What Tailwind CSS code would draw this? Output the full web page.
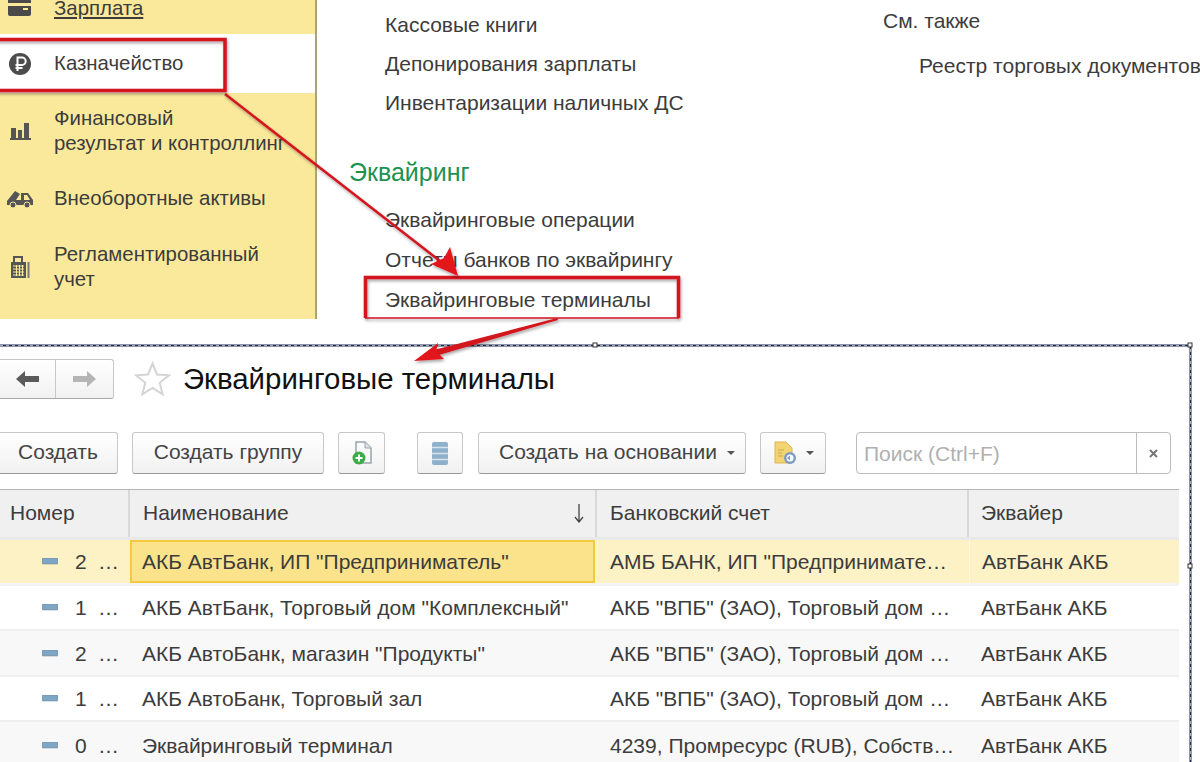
<!DOCTYPE html>
<html lang="ru">
<head>
<meta charset="utf-8">
<script src="https://cdn.jsdelivr.net/npm/@tailwindcss/browser@4"></script>
<title>Эквайринговые терминалы</title>
</head>
<body class="bg-white">
<div class="relative w-[1200px] h-[762px] overflow-hidden bg-white font-['Liberation_Sans',Arial,sans-serif] text-[21px] leading-[25px] text-[#3c3c3c]">

  <!-- Upper screenshot -->
  <div class="flex h-[319px]">
    <aside class="w-[317px] h-[319px] shrink-0 overflow-hidden bg-[#fbe99b] border-r-2 border-[#a9a27a] text-[20.400px]">
      <div class="flex flex-col -mt-[25px]">
        <div class="h-[59px] pt-[7px] flex items-center">
          <div class="w-[54px] pl-[8px] shrink-0"><svg width="24" height="22" viewBox="0 0 24 22"><rect width="23" height="17" y="2" rx="2" fill="#4a4a4a"/><rect y="6" width="23" height="3" fill="#fbe99b"/><rect x="15" y="11" width="5" height="2" fill="#fbe99b"/></svg></div>
          <span class="underline underline-offset-2">Зарплата</span>
        </div>
        <div class="h-[59px] flex items-center bg-white">
          <div class="w-[54px] pl-[8px] shrink-0"><svg width="24" height="24" viewBox="0 0 24 24"><circle cx="12" cy="12" r="11" fill="#4c4c4c"/><path d="M9.500 19V5.500h4.500a3.700 3.700 0 0 1 0 7.400H7.500M7.500 16h7" fill="none" stroke="#fff" stroke-width="2"/></svg></div>
          <span>Казначейство</span>
        </div>
        <div class="h-[75px] flex items-center">
          <div class="w-[54px] pl-[9px] shrink-0"><svg width="23" height="18" viewBox="0 0 23 18"><path d="M2 6h5v10H2zM9 8h4v8H9zM15 1h5v15h-5z" fill="#555"/><rect x="1" y="16" width="21" height="2" fill="#555"/></svg></div>
          <span>Финансовый<br>результат и контроллинг</span>
        </div>
        <div class="h-[60px] flex items-center">
          <div class="w-[54px] pl-[6px] shrink-0"><svg width="28" height="22" viewBox="0 0 28 22"><path d="M1 14 9 4l5 3-4 6h5V6h7l5 7v5H1z" fill="#555"/><path d="M18 8h3l3 5h-6z" fill="#fbe99b"/><circle cx="7" cy="18" r="3" fill="#555" stroke="#fbe99b"/><circle cx="21" cy="18" r="3" fill="#555" stroke="#fbe99b"/></svg></div>
          <span>Внеоборотные активы</span>
        </div>
        <div class="h-[77px] flex items-center">
          <div class="w-[54px] pl-[10px] shrink-0"><svg width="20" height="24" viewBox="0 0 20 24"><path d="M3 1h10v6h3v16H1V7h2z" fill="#555"/><rect x="5" y="3" width="6" height="4" fill="#fbe99b"/><path d="M3 11h11M3 14h11M3 17h11M3 20h11M6.500 10v11M9.500 10v11M12.500 10v11" stroke="#fbe99b" stroke-width="1"/><rect x="17.500" y="7" width="2" height="16" fill="#777"/></svg></div>
          <span>Регламентированный<br>учет</span>
        </div>
      </div>
    </aside>

    <section class="w-[566px] shrink-0 pl-[32px] flex flex-col">
      <ul class="pl-[36px] flex flex-col gap-[14px] pt-[12px]">
        <li>Кассовые книги</li>
        <li>Депонирования зарплаты</li>
        <li>Инвентаризации наличных ДС</li>
      </ul>
      <h2 class="mt-[42px] text-[25px] leading-[30px] text-[#1d9150] font-normal">Эквайринг</h2>
      <ul class="pl-[36px] flex flex-col gap-[15px] mt-[20px]">
        <li>Эквайринговые операции</li>
        <li>Отчеты банков по эквайрингу</li>
        <li>Эквайринговые терминалы</li>
      </ul>
    </section>

    <section class="flex-1 min-w-0 whitespace-nowrap pt-[8px]">
      <div>См. также</div>
      <div class="pl-[36px] mt-[20px]">Реестр торговых документов</div>
    </section>
  </div>

  <!-- Lower screenshot -->
  <div class="mt-[26px] w-[1179px]">
    <div class="flex items-center pt-[13px] h-[54px]">
      <div class="flex w-[116px] h-[40px] -ml-[2px] shrink-0 rounded-r-[3px] border border-[#c8c8c8] border-b-[#aaa] bg-gradient-to-b from-white to-[#f1f1f1]">
        <div class="w-[57px] flex items-center justify-end pr-[16px] border-r border-[#c8c8c8]">
          <svg width="23" height="16" viewBox="0 0 23 16"><path d="M0 8 9 0v5h14v6H9v5z" fill="#5b5b5b"/></svg>
        </div>
        <div class="flex-1 flex items-center justify-center">
          <svg width="23" height="16" viewBox="0 0 23 16"><path d="M23 8 14 0v5H0v6h14v5z" fill="#b5b5b5"/></svg>
        </div>
      </div>
      <svg class="ml-[20px]" width="37" height="36" viewBox="0 0 37 36"><path d="M18.500 2.500 23 13.500l12 .8-9.300 7.500 3 11.500-10.200-6.300-10.200 6.300 3-11.500L2 14.300l12-.8z" fill="#fff" stroke="#d4d4d4" stroke-width="2"/></svg>
      <h1 class="ml-[12px] text-[29.400px] leading-[34px] font-normal text-[#111]">Эквайринговые терминалы</h1>
    </div>

    <div class="flex items-stretch h-[42px] mt-[33px] text-[#444]">
      <button class="w-[120px] -ml-[2px] flex items-center justify-center rounded-[3px] border border-[#c8c8c8] border-b-[#999] bg-gradient-to-b from-white to-[#f1f1f1]"><span class="-mt-[4px]">Создать</span></button>
      <button class="w-[192px] ml-[14px] flex items-center justify-center rounded-[3px] border border-[#c8c8c8] border-b-[#999] bg-gradient-to-b from-white to-[#f1f1f1]"><span class="-mt-[4px]">Создать группу</span></button>
      <button class="w-[47px] ml-[14px] flex items-center justify-center rounded-[3px] border border-[#c8c8c8] border-b-[#999] bg-gradient-to-b from-white to-[#f1f1f1]">
        <svg width="22" height="24" viewBox="0 0 22 24"><path d="M5 1h9l6 6v15H5z" fill="#fafafa" stroke="#9aa5ad" stroke-width="1.500"/><path d="M14 1v6h6" fill="#dfe3e6" stroke="#9aa5ad"/><circle cx="8" cy="17" r="6.500" fill="#3cab48"/><path d="M8 13.500v7M4.500 17h7" stroke="#fff" stroke-width="2"/></svg>
      </button>
      <button class="w-[46px] ml-[32px] flex items-center justify-center rounded-[3px] border border-[#c8c8c8] border-b-[#999] bg-gradient-to-b from-white to-[#f1f1f1]">
        <svg width="16" height="23" viewBox="0 0 16 23"><rect width="16" height="23" rx="2" fill="#8fb0cb"/><path d="M0 5.500h16M0 11.500h16M0 17.500h16" stroke="#d7e3ec" stroke-width="1.500"/></svg>
      </button>
      <button class="w-[268px] ml-[15px] flex items-center gap-[10px] pl-[20px] rounded-[3px] border border-[#c8c8c8] border-b-[#999] bg-gradient-to-b from-white to-[#f1f1f1]">
        <span class="-mt-[4px]">Создать на основании</span>
        <svg width="8" height="4" viewBox="0 0 8 4"><path d="M0 0h8L4 4z" fill="#555"/></svg>
      </button>
      <button class="w-[66px] ml-[14px] flex items-center justify-center gap-[9px] rounded-[3px] border border-[#c8c8c8] border-b-[#999] bg-gradient-to-b from-white to-[#f1f1f1]">
        <svg width="24" height="24" viewBox="0 0 24 24"><path d="M2 1h11l6 6v15H2z" fill="#f3d472" stroke="#dcb64c"/><path d="M5 9h6M5 12h4M5 15h5" stroke="#c9a94d"/><circle cx="17" cy="17" r="6" fill="#7f9cc4"/><circle cx="17" cy="17" r="3.500" fill="#fff"/><path d="M14 17l3-2.500v5z" fill="#7f9cc4"/></svg>
        <svg width="8" height="4" viewBox="0 0 8 4"><path d="M0 0h8L4 4z" fill="#555"/></svg>
      </button>
      <div class="w-[315px] ml-[30px] flex rounded-[4px] border border-[#bdbdbd] bg-white">
        <span class="flex-1 pl-[7px] self-center text-[#b0b0b0]">Поиск (Ctrl+F)</span>
        <span class="w-[34px] flex items-center justify-center border-l border-[#bdbdbd]">
          <svg width="9" height="9" viewBox="0 0 9 9"><path d="M1 1l7 7M8 1 1 8" stroke="#777" stroke-width="2"/></svg>
        </span>
      </div>
    </div>

    <div class="mt-[15px] border-t border-[#b5b5b5]">
      <div class="grid grid-cols-[130px_467px_372px_210px] h-[50px] pb-0 bg-[#f0f0f0] border-b-[3px] border-[#e9e9e9]">
        <div class="flex items-center pl-[10px] pb-[2px] border-r-2 border-[#d9d9d9]">Номер</div>
        <div class="flex items-center justify-between pl-[13px] pr-[11px] pb-[2px] border-r-2 border-[#d9d9d9]">
          <span>Наименование</span>
          <svg width="10" height="20" viewBox="0 0 10 20"><path d="M5 1v17M1 14l4 5 4-5" fill="none" stroke="#444" stroke-width="1.300"/></svg>
        </div>
        <div class="flex items-center pl-[13px] pb-[2px] border-r-2 border-[#d9d9d9]">Банковский счет</div>
        <div class="flex items-center pl-[12px] pb-[2px]">Эквайер</div>
      </div>

      <div class="grid grid-cols-[130px_467px_372px_210px] h-[45.750px] bg-[#fdf2c6] border-b-[3px] border-[#f3f3f3]">
        <div class="flex items-center pl-[42px]"><svg width="16" height="7" viewBox="0 0 16 7"><rect width="16" height="6" rx="1" fill="#7fa6c4" stroke="#68808f" stroke-width=".5"/></svg><span class="ml-[17px] w-[23px]">2</span><span>…</span></div>
        <div class="flex items-center pl-[10px] bg-[#fbe38c] border-2 border-[#f5c93c] mr-[2px]">АКБ АвтБанк, ИП "Предприниматель"</div>
        <div class="pl-[13px] flex items-center whitespace-nowrap overflow-hidden">АМБ БАНК, ИП "Предпринимате…</div>
        <div class="pl-[12px] flex items-center border-l border-[#fbf8ea]">АвтБанк АКБ</div>
      </div>
      <div class="grid grid-cols-[130px_467px_372px_210px] h-[45.500px] bg-white border-b-[2px] border-[#efefef]">
        <div class="flex items-center pl-[42px]"><svg width="16" height="7" viewBox="0 0 16 7"><rect width="16" height="6" rx="1" fill="#7fa6c4" stroke="#68808f" stroke-width=".5"/></svg><span class="ml-[17px] w-[23px]">1</span><span>…</span></div>
        <div class="pl-[12px] flex items-center">АКБ АвтБанк, Торговый дом "Комплексный"</div>
        <div class="pl-[13px] flex items-center whitespace-nowrap overflow-hidden">АКБ "ВПБ" (ЗАО), Торговый дом …</div>
        <div class="pl-[12px] flex items-center">АвтБанк АКБ</div>
      </div>
      <div class="grid grid-cols-[130px_467px_372px_210px] h-[45.500px] bg-[#f8f8f8] border-b-[2px] border-[#efefef]">
        <div class="flex items-center pl-[42px]"><svg width="16" height="7" viewBox="0 0 16 7"><rect width="16" height="6" rx="1" fill="#7fa6c4" stroke="#68808f" stroke-width=".5"/></svg><span class="ml-[17px] w-[23px]">2</span><span>…</span></div>
        <div class="pl-[12px] flex items-center">АКБ АвтоБанк, магазин "Продукты"</div>
        <div class="pl-[13px] flex items-center whitespace-nowrap overflow-hidden">АКБ "ВПБ" (ЗАО), Торговый дом …</div>
        <div class="pl-[12px] flex items-center">АвтБанк АКБ</div>
      </div>
      <div class="grid grid-cols-[130px_467px_372px_210px] h-[45.500px] bg-white border-b-[2px] border-[#efefef]">
        <div class="flex items-center pl-[42px]"><svg width="16" height="7" viewBox="0 0 16 7"><rect width="16" height="6" rx="1" fill="#7fa6c4" stroke="#68808f" stroke-width=".5"/></svg><span class="ml-[17px] w-[23px]">1</span><span>…</span></div>
        <div class="pl-[12px] flex items-center">АКБ АвтоБанк, Торговый зал</div>
        <div class="pl-[13px] flex items-center whitespace-nowrap overflow-hidden">АКБ "ВПБ" (ЗАО), Торговый дом …</div>
        <div class="pl-[12px] flex items-center">АвтБанк АКБ</div>
      </div>
      <div class="grid grid-cols-[130px_467px_372px_210px] h-[45.500px] bg-[#f8f8f8]">
        <div class="flex items-center pl-[42px]"><svg width="16" height="7" viewBox="0 0 16 7"><rect width="16" height="6" rx="1" fill="#7fa6c4" stroke="#68808f" stroke-width=".5"/></svg><span class="ml-[17px] w-[23px]">0</span><span>…</span></div>
        <div class="pl-[12px] flex items-center">Эквайринговый терминал</div>
        <div class="pl-[13px] flex items-center whitespace-nowrap overflow-hidden">4239, Промресурс (RUB), Собств…</div>
        <div class="pl-[12px] flex items-center">АвтБанк АКБ</div>
      </div>
    </div>
  </div>

  <!-- Annotation overlay: red frames, arrows and selection handles -->
  <svg class="absolute inset-0 pointer-events-none" width="1200" height="762" viewBox="0 0 1200 762">
    <defs>
      <filter id="s" x="-10%" y="-10%" width="120%" height="130%"><feDropShadow dx="1" dy="2" stdDeviation="1.500" flood-color="#000" flood-opacity=".35"/></filter>
    </defs>
    <path d="M0 345.500H1190.500V762" fill="none" stroke="#1d2b4f" stroke-width="2"/>
    <path d="M0 345.500H1190.500V762" fill="none" stroke="#fff" stroke-width=".6" stroke-dasharray="3 3"/>
    <g fill="#fff" stroke="#333" stroke-width="1">
      <rect x="593" y="343" width="4" height="4"/>
      <rect x="1188" y="343" width="4" height="4"/>
      <rect x="1188" y="564" width="4" height="4"/>
    </g>
    <g filter="url(#s)" fill="none" stroke="#d3141f" stroke-width="3.500">
      <path d="M-3 39.500H225V90.500H-3"/>
      <path d="M365.500 318V277.500H678.500V318"/>
      <path d="M365 318H679" stroke-width="1.500"/>
    </g>
    <g filter="url(#s)">
      <path d="M225 94 449 268" stroke="#d3141f" stroke-width="2.500" fill="none"/>
      <path d="M458 276 431 264 444 258 450 247z" fill="#e3141f"/>
      <path d="M557 318 558 320 432 357 430 351z" fill="#d3141f"/>
      <path d="M414 361 438 343 436 351 444 359z" fill="#e3141f"/>
    </g>
  </svg>
</div>
</body>
</html>
